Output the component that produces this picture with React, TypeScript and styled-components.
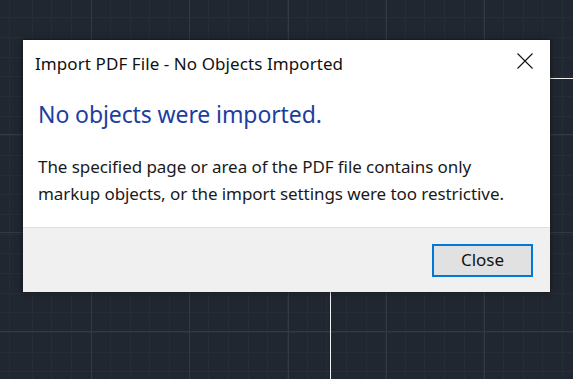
import styled, { createGlobalStyle } from 'styled-components'

const GlobalStyle = createGlobalStyle`
    html, body {
        margin: 0;
        padding: 0;
        width: 100%;
        height: 100%;
        overflow: hidden;
    }
    #root {
        height: 100%;
    }
`;

const App = () => {
    return (
        <>
            <GlobalStyle />
            <Canvas>
                <CrossV />
                <CrossH />
                <Dialog>
                    <TitleBar>
                        <Title>Import PDF File - No Objects Imported</Title>
                        <CloseIcon aria-label="Close">
                            <svg width="16" height="16" viewBox="0 0 16 16">
                                <path d="M0.5 0.5 L15.5 15.5 M15.5 0.5 L0.5 15.5" stroke="#111" strokeWidth="1.1" fill="none" />
                            </svg>
                        </CloseIcon>
                    </TitleBar>
                    <Content>
                        <Heading>No objects were imported.</Heading>
                        <Body>
                            The specified page or area of the PDF file contains only<br />
                            markup objects, or the import settings were too restrictive.
                        </Body>
                    </Content>
                    <Footer>
                        <Button>Close</Button>
                    </Footer>
                </Dialog>
            </Canvas>
        </>
    )
}

const Canvas = styled.div`
    position: relative;
    width: 573px;
    height: 379px;
    box-sizing: border-box;
    padding: 40px 0 0 23px;
    background-color: #212730;
    background-image:
        repeating-linear-gradient(90deg, transparent 0 97.2px, #323942 97.2px 98.2px),
        repeating-linear-gradient(0deg, transparent 0 97.3px, #323942 97.3px 98.3px),
        repeating-linear-gradient(90deg, transparent 0 18.64px, #262d36 18.64px 19.64px),
        repeating-linear-gradient(0deg, transparent 0 18.66px, #262d36 18.66px 19.66px);
    background-position: -6px 0, 0 50px, 13px 0, 0 12px;
    font-family: "Noto Sans", "Open Sans", sans-serif;
`;
/* cursor crosshair, only visible outside the dialog */
const CrossV = styled.div`
    position: absolute;
    left: 330px;
    top: 292px;
    width: 1px;
    bottom: 0;
    background: #f2f2f2;
`;
const CrossH = styled.div`
    position: absolute;
    left: 550px;
    top: 78px;
    right: 0;
    height: 1px;
    background: #f2f2f2;
`;
const Dialog = styled.div`
    position: relative;
    display: flex;
    flex-direction: column;
    width: 527px;
    height: 252px;
    background: #fff;
    box-shadow: 0 0 6px rgba(0, 0, 0, 0.55);
`;
const TitleBar = styled.div`
    display: flex;
    align-items: center;
    justify-content: space-between;
    height: 46px;
    padding: 0 17px 0 12px;
    box-sizing: border-box;
`;
const Title = styled.div`
    font-size: 17px;
    color: #111;
    letter-spacing: 0.08px;
`;
const CloseIcon = styled.div`
    display: flex;
    width: 16px;
    height: 16px;
    margin-top: -4px;
`;
const Content = styled.div`
    flex: 1;
    padding: 12px 16px 0 15px;
`;
const Heading = styled.div`
    font-size: 23px;
    line-height: 32px;
    color: #1d3e9e;
    letter-spacing: -0.1px;
`;
const Body = styled.div`
    margin-top: 23px;
    font-size: 17px;
    line-height: 27px;
    color: #1a1a1a;
    letter-spacing: -0.07px;
`;
const Footer = styled.div`
    display: flex;
    align-items: center;
    justify-content: flex-end;
    height: 65px;
    padding-right: 17px;
    box-sizing: border-box;
    background: #f0f0f0;
    border-top: 1px solid #dfdfdf;
`;
const Button = styled.button`
    width: 101px;
    height: 33px;
    box-sizing: border-box;
    border: 2px solid #0078d7;
    background: #e1e1e1;
    color: #111;
    font-family: "Noto Sans", "Open Sans", sans-serif;
    font-size: 17px;
    padding: 0 0 2px;
    cursor: pointer;
`;

export default App
